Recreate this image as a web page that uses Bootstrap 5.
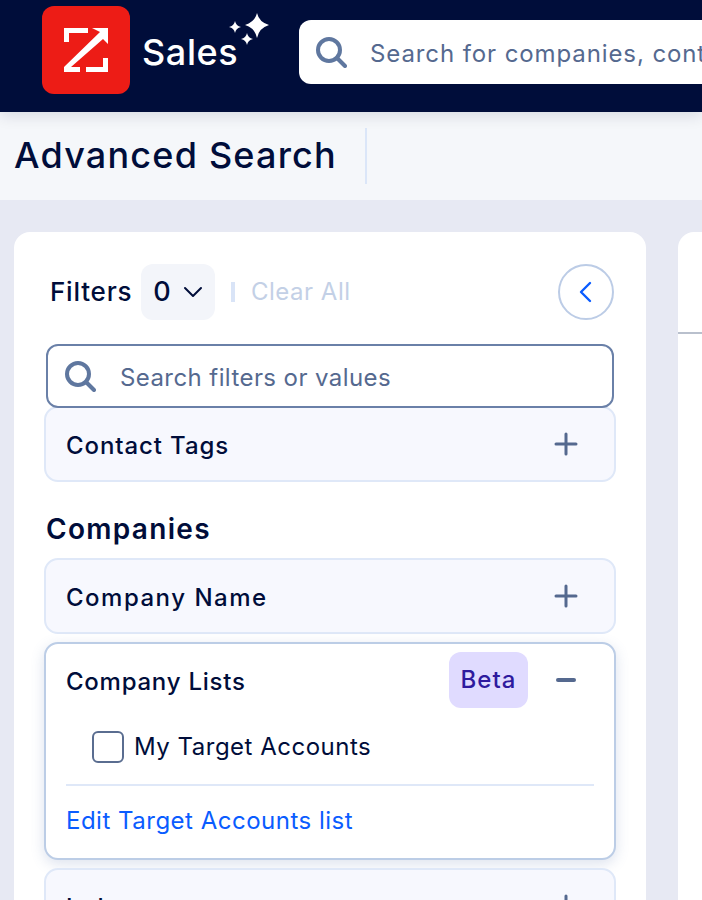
<!DOCTYPE html>
<html lang="en">
<head>
  <meta charset="UTF-8" />
  <meta name="viewport" content="width=device-width, initial-scale=1" />
  <title>Advanced Search - Sales</title>
  <link href="https://cdn.jsdelivr.net/npm/bootstrap@5.3.0/dist/css/bootstrap.min.css" rel="stylesheet">
  <style>
    html, body { height: 900px; overflow: hidden; }
    body { font-family: Inter, "Open Sans", sans-serif; color: #000d3a; background: #e7e9f3; font-size: 24px; }

    .top-bar { height: 112px; background: #000d3a; box-shadow: 0 4px 14px rgba(0, 13, 58, .12); position: relative; z-index: 2; padding-left: 42px; }
    .logo-box { width: 88px; height: 88px; margin-top: 6px; background: #ed1c16; border-radius: 12px; }
    .brand-name { color: #fff; font-size: 36px; font-weight: 500; margin: 34px 0 0 12px; letter-spacing: .6px; width: 96px; }
    .sparkles { margin-left: -14px; margin-top: 11px; }
    .global-search { height: 64px; margin: 20px 0 0 27px; background: #fff; border-radius: 12px 0 0 12px; padding-left: 16px; gap: 23px; min-width: 0; }
    .global-search input, .filter-search input { border: 0; outline: 0; background: transparent; padding: 3px 0 0; font-size: 24px; color: #55698f; width: 100%; }
    .global-search input { letter-spacing: .9px; }
    .filter-search input { letter-spacing: .42px; }
    .global-search input::placeholder, .filter-search input::placeholder { color: #55698f; opacity: 1; }

    .sub-bar { height: 88px; background: #f5f7fa; padding-left: 14px; }
    .page-title { font-size: 36px; font-weight: 500; margin: 0; letter-spacing: 1.2px; width: 351px; }
    .sub-rule { width: 2px; height: 56px; background: #dbe6f8; }

    .work-area { padding: 32px 0 0 14px; gap: 32px; }
    .filter-panel { width: 632px; height: 700px; flex: none; background: #fff; border-radius: 16px; padding: 32px 30px 0; }
    .result-panel { height: 700px; background: #fff; border-radius: 16px 0 0 0; padding-top: 100px; }
    .result-rule { height: 2px; background: #b9c0cd; }

    .filters-head { height: 56px; padding-left: 6px; padding-right: 2px; }
    .filters-label { font-size: 26px; font-weight: 500; width: 91px; letter-spacing: .8px; margin-top: -2px; }
    .count-chip { width: 74px; height: 56px; background: #f3f5fa; border-radius: 12px; font-size: 27px; font-weight: 500; gap: 12px; }
    .head-rule { width: 4px; height: 20px; background: #d9e4f7; margin: 0 16px; }
    .clear-all { color: #c3d0e6; letter-spacing: .5px; }
    .collapse-btn { width: 56px; height: 56px; border: 2px solid #bccce6; border-radius: 50%; background: #fff; }

    .filter-search { height: 64px; margin: 24px 2px 0; border: 2px solid #6a80a8; border-radius: 12px; padding-left: 16px; gap: 24px; background: #fff; position: relative; z-index: 1; }
    .facet { border: 2px solid #dfe8f8; border-radius: 14px; background: #f7f8fe; padding: 0 36px 0 20px; height: 76px; font-weight: 500; letter-spacing: .9px; }
    .facet-name { padding-top: 4px; }
    .facet-wide { letter-spacing: 1.5px; }
    .facet-first { margin-top: -2px; }
    .facet-open { height: 218px; margin-top: 8px; background: #fff; border-color: #bccde6; padding-top: 8px; display: block; box-shadow: 0 4px 14px rgba(80, 110, 170, .2); font-weight: 400; }
    .facet-open-head { height: 56px; font-weight: 500; letter-spacing: .75px; }
    .group-title { font-size: 28px; font-weight: 600; margin: 0; padding: 30px 0 11px 2px; line-height: 35px; letter-spacing: 1.3px; }
    .beta-tag { width: 79px; height: 56px; background: #e0dbff; color: #2e1a9e; border-radius: 12px; margin-right: 26px; font-weight: 500; letter-spacing: 1px; }

    .account-row { height: 32px; margin: 23px 0 21px 26px; gap: 10px; }
    .account-check.form-check-input { width: 32px; height: 32px; margin: 0; border: 2px solid #5a6d90; border-radius: 6px; flex: none; }
    .account-row label { letter-spacing: .5px; }
    .facet-rule { height: 2px; background: #dfe8f8; margin-right: -16px; }
    .edit-link { color: #0a5cff; text-decoration: none; display: block; margin-top: 17px; letter-spacing: .5px; }
    .facet-next { margin-top: 8px; }
  </style>
</head>
<body>

<!-- top bar -->
<header class="top-bar d-flex">
  <div class="logo-box flex-shrink-0">
    <svg width="88" height="88" viewBox="0 0 88 88" fill="#fff">
      <path d="M22 22H46V27H27V36H22Z" />
      <path d="M50 22H66V38L61 33L29 61H38V66H22V61L58 26Z" />
      <path d="M44 61H61V52H66V66H44Z" />
    </svg>
  </div>
  <div class="brand-name flex-shrink-0 lh-1">Sales</div>
  <svg class="sparkles flex-shrink-0" width="48" height="40" viewBox="0 0 48 40" fill="#fff">
    <path d="M33 2Q35 11 45 14Q35 17 33 27Q31 17 21 14Q31 11 33 2Z" />
    <path d="M11 10Q12 15 17 16Q12 17 11 22Q10 17 5 16Q10 15 11 10Z" />
    <path d="M23 22Q24 27 29 28Q24 29 23 34Q22 29 17 28Q22 27 23 22Z" />
  </svg>
  <div class="global-search d-flex align-items-center flex-grow-1">
    <svg class="flex-shrink-0" width="32" height="32" viewBox="0 0 32 32" fill="none" stroke="#5f779f" stroke-width="4" stroke-linecap="round">
      <circle cx="14" cy="14" r="11" /><path d="M22 22L30 30" />
    </svg>
    <input type="text" placeholder="Search for companies, contacts, industries...">
  </div>
</header>

<!-- page title -->
<div class="sub-bar d-flex align-items-center">
  <h1 class="page-title">Advanced Search</h1>
  <div class="sub-rule"></div>
</div>

<main class="work-area d-flex">
  <section class="filter-panel">
    <div class="filters-head d-flex align-items-center">
      <span class="filters-label">Filters</span>
      <span class="count-chip d-flex align-items-center justify-content-center">0
        <svg width="20" height="12" viewBox="0 0 20 12" fill="none" stroke="#000d3a" stroke-width="2" stroke-linecap="round" stroke-linejoin="round"><path d="M2 2L10 10L18 2" /></svg>
      </span>
      <span class="head-rule"></span>
      <span class="clear-all">Clear All</span>
      <button type="button" class="collapse-btn ms-auto d-flex align-items-center justify-content-center p-0" aria-label="Collapse">
        <svg width="14" height="22" viewBox="0 0 14 22" fill="none" stroke="#0a5cff" stroke-width="2.4" stroke-linecap="round" stroke-linejoin="round"><path d="M11 2L2 11L11 20" /></svg>
      </button>
    </div>

    <div class="filter-search d-flex align-items-center">
      <svg class="flex-shrink-0" width="32" height="32" viewBox="0 0 32 32" fill="none" stroke="#5f779f" stroke-width="4" stroke-linecap="round">
        <circle cx="14" cy="14" r="11" /><path d="M22 22L30 30" />
      </svg>
      <input type="text" placeholder="Search filters or values">
    </div>

    <div class="facet facet-first d-flex align-items-center justify-content-between">
      <span class="facet-name">Contact Tags</span>
      <svg width="24" height="24" viewBox="0 0 24 24" stroke="#55698f" stroke-width="3" stroke-linecap="round"><path d="M12 2V22M2 12H22" /></svg>
    </div>

    <h2 class="group-title">Companies</h2>

    <div class="facet d-flex align-items-center justify-content-between">
      <span class="facet-name facet-wide">Company Name</span>
      <svg width="24" height="24" viewBox="0 0 24 24" stroke="#55698f" stroke-width="3" stroke-linecap="round"><path d="M12 2V22M2 12H22" /></svg>
    </div>

    <div class="facet facet-open">
      <div class="facet-open-head d-flex align-items-center">
        <span class="facet-name me-auto">Company Lists</span>
        <span class="beta-tag d-flex align-items-center justify-content-center">Beta</span>
        <svg width="24" height="24" viewBox="0 0 24 24" stroke="#55698f" stroke-width="4" stroke-linecap="round"><path d="M4 12H20" /></svg>
      </div>
      <div class="account-row d-flex align-items-center">
        <input class="form-check-input account-check" type="checkbox" id="target-accounts">
        <label for="target-accounts">My Target Accounts</label>
      </div>
      <div class="facet-rule"></div>
      <a class="edit-link" href="#">Edit Target Accounts list</a>
    </div>

    <div class="facet facet-next d-flex align-items-center justify-content-between">
      <span class="facet-name">Industry</span>
      <svg width="24" height="24" viewBox="0 0 24 24" stroke="#55698f" stroke-width="3" stroke-linecap="round"><path d="M12 2V22M2 12H22" /></svg>
    </div>
  </section>

  <section class="result-panel flex-grow-1">
    <div class="result-rule"></div>
  </section>
</main>

<script src="https://cdn.jsdelivr.net/npm/bootstrap@5.3.0/dist/js/bootstrap.bundle.min.js"></script>
</body>
</html>
